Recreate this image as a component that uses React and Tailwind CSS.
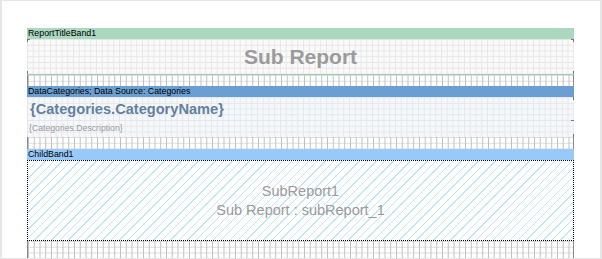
export default function App() {
  const bandGrid =
    "bg-[linear-gradient(to_right,#e7e7e7_1px,transparent_1px),linear-gradient(to_bottom,#e7e7e7_1px,transparent_1px)] bg-[length:5.75px_5.75px]";
  const gapGrid =
    "bg-[linear-gradient(to_right,#c0c0c0_1px,transparent_1px),linear-gradient(to_bottom,#dddddd_1px,transparent_1px)] bg-[length:5.75px_5.75px]";
  const headerText = "text-[8.8px] leading-[11px] text-black pl-[1px] whitespace-nowrap";
  return (
    <div
      className="w-[602px] h-[259px] bg-white border-l-2 border-r-2 border-t border-b border-[#e6e6e6] overflow-hidden"
      style={{ fontFamily: '"Liberation Sans", Arial, sans-serif' }}
    >
      <div className="ml-[25px] mt-[27px] w-[547px] flex flex-col">
        {/* Report title band */}
        <div className={`h-[11px] bg-[#a9d8be] ${headerText}`}>ReportTitleBand1</div>
        <div className={`relative h-[35px] bg-[#f9faf9] ${bandGrid} flex items-center justify-center`}>
          <span className="text-[21px] font-bold text-[#9b9b9b] leading-none">Sub Report</span>
          <div className="absolute left-0 top-0 w-[3px] h-[3px] border-l border-t border-[#777]" />
          <div className="absolute right-0 top-0 w-[3px] h-[3px] border-r border-t border-[#777]" />
          <div className="absolute left-0 bottom-0 w-[3px] h-[3px] border-l border-[#777]" />
          <div className="absolute right-0 bottom-0 w-[3px] h-[3px] border-r border-[#777]" />
        </div>
        <div className="h-px bg-[#9fcfb3]" />
        <div className={`h-[11px] bg-white ${gapGrid} border-l border-r border-[#8a8a8a]`} />

        {/* Data band */}
        <div className={`h-[11px] bg-[#6b9fd3] ${headerText}`}>DataCategories; Data Source: Categories</div>
        <div className={`relative h-[40px] bg-[#f4f8fd] ${bandGrid}`}>
          <div className="absolute left-[3px] top-[3px] text-[14.6px] font-bold text-[#63819f] leading-[18px] whitespace-nowrap">
            {"{Categories.CategoryName}"}
          </div>
          <div className="absolute left-[2px] top-[26px] text-[8.7px] text-[#999] leading-[11px] whitespace-nowrap">
            {"{Categories.Description}"}
          </div>
          <div className="absolute right-0 top-0 w-[3px] h-[3px] border-r border-[#777]" />
          <div className="absolute right-0 top-[23px] w-[3px] h-[1px] bg-[#777]" />
          <div className="absolute right-0 bottom-0 w-[3px] h-[3px] border-r border-[#777]" />
        </div>
        <div className={`h-[12px] bg-white ${gapGrid} border-l border-r border-[#8a8a8a]`} />

        {/* Child band */}
        <div className={`h-[11px] bg-[#99c9f8] ${headerText}`}>ChildBand1</div>
        <div className="h-[81px] bg-white bg-[repeating-linear-gradient(135deg,#c2e4f3_0px,#c2e4f3_1px,transparent_1px,transparent_6px)] border border-dotted border-black flex flex-col items-center justify-center text-[14.5px] leading-[19px] text-[#9c9a9a]">
          <div>SubReport1</div>
          <div>Sub Report : subReport_1</div>
        </div>
        <div className={`h-[20px] bg-white ${gapGrid} border-l border-r border-[#8a8a8a]`} />
      </div>
    </div>
  );
}
